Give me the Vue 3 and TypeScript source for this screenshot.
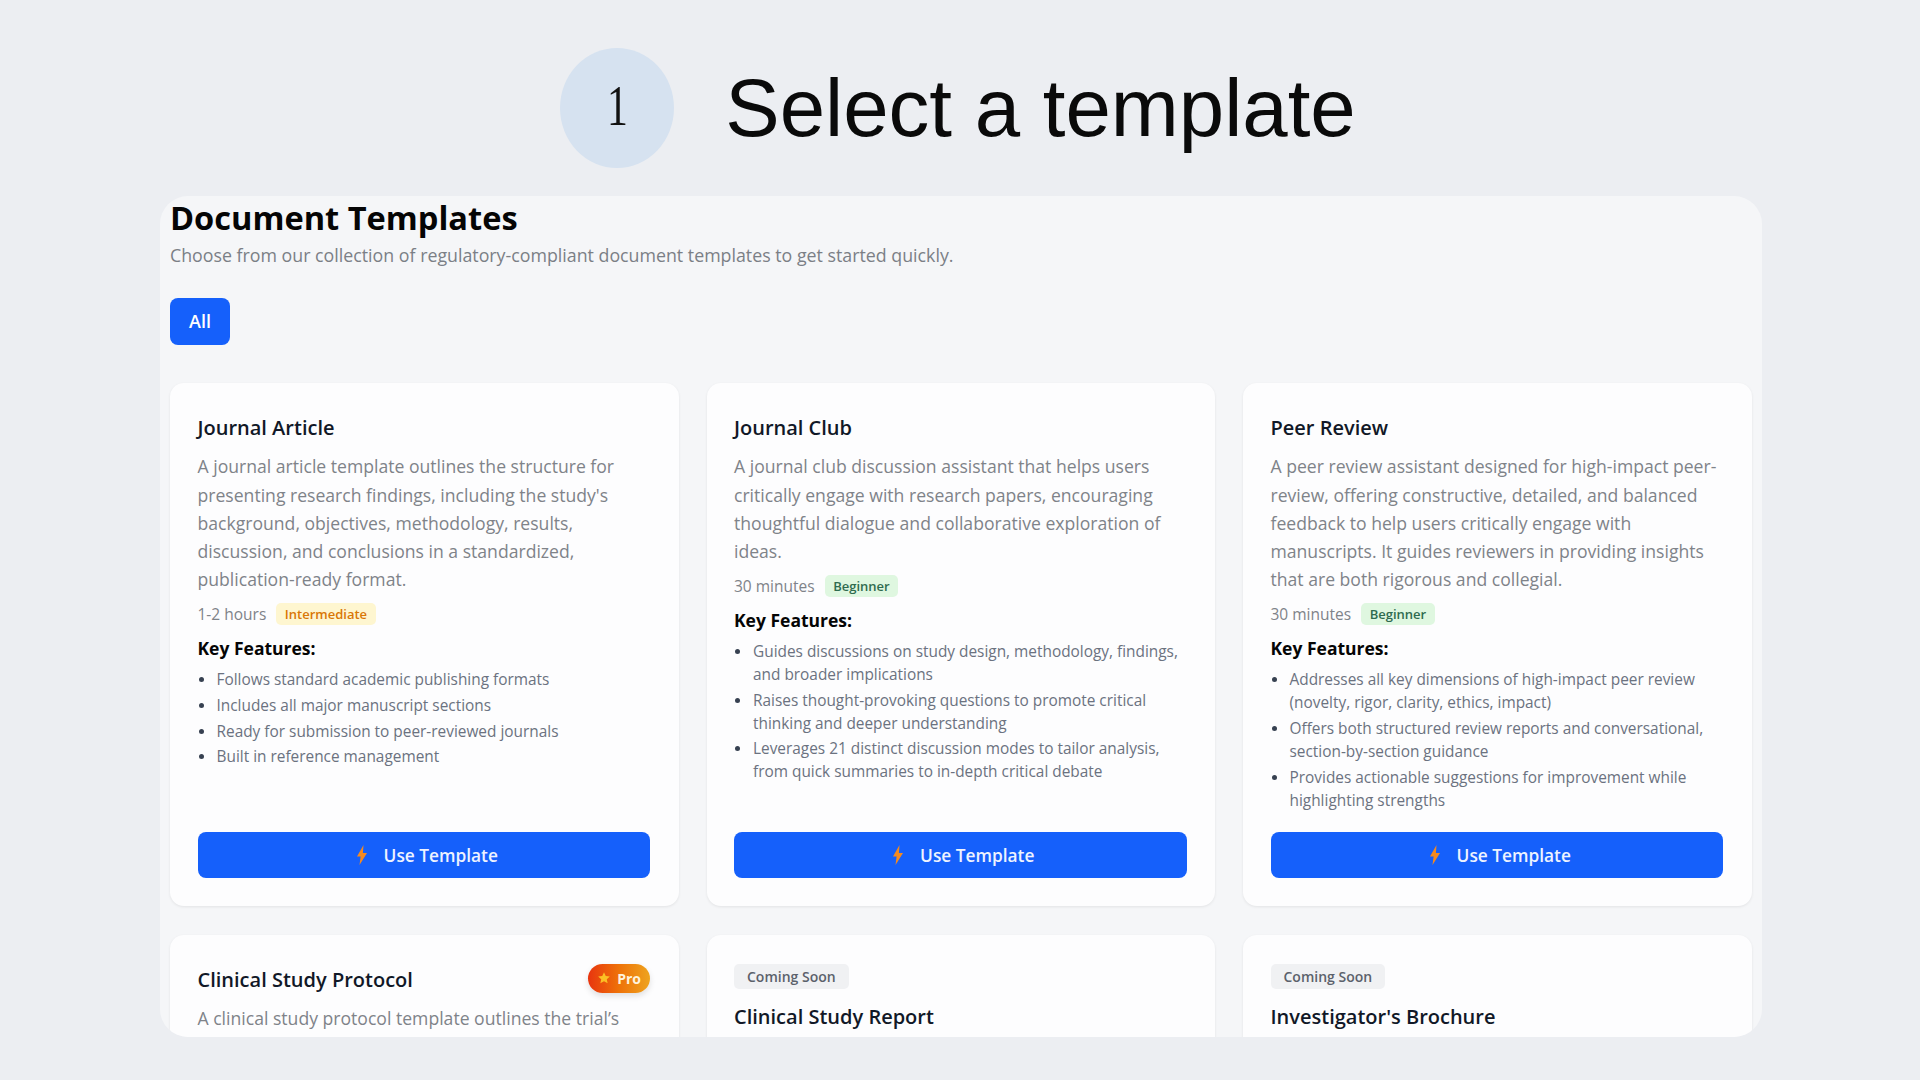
<template>
	<div class="page">
		<header class="step">
			<div class="step-num"><span>1</span></div>
			<h1>Select a template</h1>
		</header>

		<section class="panel">
			<h2>Document Templates</h2>
			<p class="lead">Choose from our collection of regulatory-compliant document templates to get started quickly.</p>
			<button class="filter">All</button>

			<div class="grid">
				<article v-for="t in templates" :key="t.name" class="card">
					<span v-if="t.soon" class="soon">Coming Soon</span>
					<div class="card-head">
						<h3>{{ t.name }}</h3>
						<span v-if="t.pro" class="pro">
							<svg viewBox="0 0 24 24" width="14" height="14"><path fill="#fbbf24" d="M12 2l3 6.600 7 .8-5.200 4.800 1.400 7L12 17.700 5.800 21.200l1.400-7L2 9.400l7-.8z" /></svg>
							Pro
						</span>
					</div>
					<p v-if="t.desc" class="desc">{{ t.desc }}</p>
					<template v-if="t.features">
						<div class="meta">
							<span>{{ t.time }}</span>
							<span class="level" :class="t.level === 'Beginner' ? 'green' : 'amber'">{{ t.level }}</span>
						</div>
						<h4>Key Features:</h4>
						<ul>
							<li v-for="f in t.features" :key="f">{{ f }}</li>
						</ul>
						<button class="use">
							<svg viewBox="0 0 12 20" width="12" height="20"><path fill="#f58a1f" d="M7.500 0L1 11.500h3.600L3.500 20 11 8H6.900z" /></svg>
							Use Template
						</button>
					</template>
				</article>
			</div>
		</section>
	</div>
</template>

<script setup lang="ts">
interface Template {
	name: string;
	desc?: string;
	time?: string;
	level?: string;
	features?: string[];
	pro?: boolean;
	soon?: boolean;
}

const templates: Template[] = [
	{
		name: "Journal Article",
		desc: "A journal article template outlines the structure for presenting research findings, including the study's background, objectives, methodology, results, discussion, and conclusions in a standardized, publication-ready format.",
		time: "1-2 hours",
		level: "Intermediate",
		features: [
			"Follows standard academic publishing formats",
			"Includes all major manuscript sections",
			"Ready for submission to peer-reviewed journals",
			"Built in reference management",
		],
	},
	{
		name: "Journal Club",
		desc: "A journal club discussion assistant that helps users critically engage with research papers, encouraging thoughtful dialogue and collaborative exploration of ideas.",
		time: "30 minutes",
		level: "Beginner",
		features: [
			"Guides discussions on study design, methodology, findings, and broader implications",
			"Raises thought-provoking questions to promote critical thinking and deeper understanding",
			"Leverages 21 distinct discussion modes to tailor analysis, from quick summaries to in-depth critical debate",
		],
	},
	{
		name: "Peer Review",
		desc: "A peer review assistant designed for high-impact peer-review, offering constructive, detailed, and balanced feedback to help users critically engage with manuscripts. It guides reviewers in providing insights that are both rigorous and collegial.",
		time: "30 minutes",
		level: "Beginner",
		features: [
			"Addresses all key dimensions of high-impact peer review (novelty, rigor, clarity, ethics, impact)",
			"Offers both structured review reports and conversational, section-by-section guidance",
			"Provides actionable suggestions for improvement while highlighting strengths",
		],
	},
	{
		name: "Clinical Study Protocol",
		desc: "A clinical study protocol template outlines the trial’s",
		pro: true,
	},
	{ name: "Clinical Study Report", soon: true },
	{ name: "Investigator's Brochure", soon: true },
];
</script>

<style scoped>
.page {
	width: 1920px;
	height: 1080px;
	box-sizing: border-box;
	padding-top: 48px;
	background: #eceef2;
	font-family: "Open Sans", "Liberation Sans", sans-serif;
	overflow: hidden;
}

.step {
	display: flex;
	justify-content: center;
	align-items: center;
	gap: 51px;
	height: 120px;
	padding-right: 4px;
}

.step-num {
	width: 114px;
	height: 120px;
	border-radius: 50%;
	background: #d6e2f0;
	display: flex;
	align-items: center;
	justify-content: center;
	font: 58px "Liberation Serif", serif;
	color: #111;
}

.step-num span {
	display: inline-block;
	margin-top: -6px;
	transform: scaleX(0.72);
}

h1 {
	margin: 0;
	font: 400 81.6px "Liberation Sans", sans-serif;
	color: #0a0a0a;
}

.panel {
	box-sizing: border-box;
	width: 1602px;
	height: 841px;
	margin: 28px 0 0 160px;
	padding: 0 10px;
	background: #f5f6f8;
	border-radius: 28px;
	overflow: hidden;
}

h2 {
	margin: 0;
	font-size: 32.6px;
	font-weight: 700;
	line-height: 44px;
	color: #050505;
}

.lead {
	margin: 2px 0 0;
	font-size: 17.8px;
	line-height: 26px;
	color: #7b7f86;
}

.filter {
	display: block;
	width: 60px;
	height: 47px;
	margin-top: 30px;
	padding-bottom: 2px;
	border: 0;
	border-radius: 8px;
	background: #1560fb;
	color: #fff;
	font: 600 18px "Open Sans", sans-serif;
}

.grid {
	display: grid;
	grid-template-columns: repeat(3, 508.5px);
	grid-template-rows: 523px 300px;
	gap: 29px 28px;
	margin-top: 38px;
}

.card {
	box-sizing: border-box;
	display: flex;
	flex-direction: column;
	align-items: flex-start;
	padding: 28px 28.5px 28px 27.5px;
	background: #fdfdfe;
	border-radius: 14px;
	box-shadow: 0 1px 3px rgba(0, 0, 0, 0.08);
}

.card-head {
	display: flex;
	justify-content: space-between;
	align-items: center;
	align-self: stretch;
	min-height: 32px;
}

h3 {
	margin: 0;
	font-size: 20px;
	font-weight: 600;
	color: #111827;
}

.desc {
	margin: 9.3px 0 0;
	font-size: 17.6px;
	line-height: 28.2px;
	color: #7f8389;
}

.meta {
	display: flex;
	align-items: center;
	gap: 10px;
	margin-top: 7px;
	height: 28px;
	font-size: 15.5px;
	color: #7f8389;
}

.level {
	padding: 2px 8.5px;
	border-radius: 5px;
	font-size: 13px;
	font-weight: 600;
}

.green {
	background: #dff7e0;
	color: #2f6b4f;
}

.amber {
	background: #fef6d0;
	color: #d97706;
}

h4 {
	margin: 7px 0 0;
	font-size: 17.5px;
	line-height: 26px;
	font-weight: 700;
	color: #050505;
}

ul {
	margin: 7px 0 0;
	padding: 0 0 0 19px;
	list-style: none;
	font-size: 15.4px;
	line-height: 23px;
	color: #6b7280;
}

li {
	position: relative;
	margin-bottom: 2.6px;
}

li::before {
	content: "";
	position: absolute;
	left: -18px;
	top: 9px;
	width: 5px;
	height: 5px;
	border-radius: 50%;
	background: #374151;
}

.use {
	display: flex;
	align-items: center;
	justify-content: center;
	gap: 16px;
	align-self: stretch;
	height: 46px;
	margin-top: auto;
	padding: 0 0 0 6px;
	border: 0;
	border-radius: 8px;
	background: #1560fb;
	color: #eef3ff;
	font: 600 17.3px "Open Sans", sans-serif;
}

.pro {
	display: flex;
	align-items: center;
	gap: 6px;
	padding: 0 9px;
	height: 29px;
	margin-top: -2px;
	border-radius: 15px;
	background: linear-gradient(90deg, #e8350f, #ee7208 50%, #eea41f);
	color: #fff3dc;
	font-size: 14px;
	font-weight: 700;
	box-shadow: 0 3px 6px rgba(0, 0, 0, 0.12);
}

.soon {
	padding: 3px 13px;
	margin: 1px 0 11px;
	border-radius: 5px;
	background: #f0f1f3;
	font-size: 14px;
	font-weight: 600;
	color: #5b616b;
}
</style>
